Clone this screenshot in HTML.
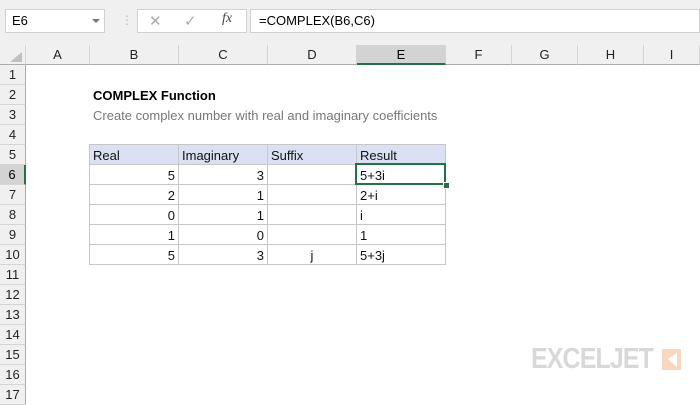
<!DOCTYPE html><html><head><style>
body{margin:0;width:700px;height:400px;background:#fff;font-family:"Liberation Sans",Calibri,sans-serif;position:relative;overflow:hidden}
.a{position:absolute}
.ch{position:absolute;top:45px;height:20px;background:#f0f0f0;border-right:1px solid #d4d4d4;border-bottom:1px solid #ababab;box-sizing:border-box;text-align:center;font-size:13px;line-height:20px;color:#222}
.rh{position:absolute;left:0;width:26px;height:20px;background:#f0f0f0;border-bottom:1px solid #d4d4d4;border-right:1px solid #ababab;box-sizing:border-box;text-align:center;font-size:13px;line-height:20px;color:#222}
.c{position:absolute;height:20px;box-sizing:border-box;font-size:13px;line-height:21px;padding:0 3px;color:#111;border-right:1px solid #c6c6c6;border-bottom:1px solid #c6c6c6}
.r{text-align:right}
</style></head><body>
<div class="a" style="left:0;top:0;width:700px;height:45px;background:#f0f0f0"></div>
<div class="a" style="left:5px;top:9px;width:100px;height:24px;background:#fff;border:1px solid #d0d0d0;box-sizing:border-box;font-size:13px;line-height:22px;padding-left:6px">E6</div>
<div class="a" style="left:92px;top:19px;width:0;height:0;border-left:4px solid transparent;border-right:4px solid transparent;border-top:4px solid #777"></div>
<div class="a" style="left:121px;top:13px;color:#bbb;font-size:12px">⋮</div>
<div class="a" style="left:137px;top:9px;width:110px;height:24px;background:#fff;border:1px solid #d0d0d0;box-sizing:border-box"></div>
<div class="a" style="left:149px;top:12px;color:#aaa;font-size:15px">✕</div>
<div class="a" style="left:184px;top:12px;color:#aaa;font-size:15px">✓</div>
<div class="a" style="left:222px;top:11px;color:#444;font-size:14px;font-style:italic;font-family:'Liberation Serif',serif">fx</div>
<div class="a" style="left:250px;top:9px;width:450px;height:24px;background:#fff;border:1px solid #d0d0d0;box-sizing:border-box;font-size:13px;line-height:22px;padding-left:8px">=COMPLEX(B6,C6)</div>
<div class="ch" style="left:0;width:26px"></div>
<div class="a" style="left:10px;top:52px;width:0;height:0;border-left:12px solid transparent;border-bottom:10px solid #c0c0c0"></div>
<div class="ch" style="left:26px;width:64px">A</div>
<div class="ch" style="left:90px;width:89px">B</div>
<div class="ch" style="left:179px;width:89px">C</div>
<div class="ch" style="left:268px;width:89px">D</div>
<div class="ch" style="left:357px;width:89px;background:#d3d3d3;border-bottom:2px solid #217346;color:#000">E</div>
<div class="ch" style="left:446px;width:66px">F</div>
<div class="ch" style="left:512px;width:66px">G</div>
<div class="ch" style="left:578px;width:66px">H</div>
<div class="ch" style="left:644px;width:56px">I</div>
<div class="rh" style="top:65px">1</div><div class="rh" style="top:85px">2</div><div class="rh" style="top:105px">3</div><div class="rh" style="top:125px">4</div><div class="rh" style="top:145px">5</div>
<div class="rh" style="top:165px;background:#d3d3d3;border-right:2px solid #217346;color:#000">6</div>
<div class="rh" style="top:185px">7</div><div class="rh" style="top:205px">8</div><div class="rh" style="top:225px">9</div><div class="rh" style="top:245px">10</div><div class="rh" style="top:265px">11</div><div class="rh" style="top:285px">12</div><div class="rh" style="top:305px">13</div><div class="rh" style="top:325px">14</div><div class="rh" style="top:345px">15</div><div class="rh" style="top:365px">16</div><div class="rh" style="top:385px">17</div>
<div class="a" style="left:93px;top:88px;font-size:13px;font-weight:bold">COMPLEX Function</div>
<div class="a" style="left:93px;top:108px;font-size:13px;color:#777">Create complex number with real and imaginary coefficients</div>
<div class="a" style="left:89px;top:145px;width:1px;height:120px;background:#c6c6c6"></div>
<div class="a" style="left:89px;top:144px;width:357px;height:1px;background:#c6c6c6"></div>
<div class="c" style="left:90px;top:145px;width:89px;background:#d9e1f2">Real</div>
<div class="c" style="left:179px;top:145px;width:89px;background:#d9e1f2">Imaginary</div>
<div class="c" style="left:268px;top:145px;width:89px;background:#d9e1f2">Suffix</div>
<div class="c" style="left:357px;top:145px;width:89px;background:#d9e1f2">Result</div>
<div class="c r" style="left:90px;top:165px;width:89px">5</div><div class="c r" style="left:179px;top:165px;width:89px">3</div><div class="c" style="left:268px;top:165px;width:89px"></div><div class="c" style="left:357px;top:165px;width:89px">5+3i</div>
<div class="c r" style="left:90px;top:185px;width:89px">2</div><div class="c r" style="left:179px;top:185px;width:89px">1</div><div class="c" style="left:268px;top:185px;width:89px"></div><div class="c" style="left:357px;top:185px;width:89px">2+i</div>
<div class="c r" style="left:90px;top:205px;width:89px">0</div><div class="c r" style="left:179px;top:205px;width:89px">1</div><div class="c" style="left:268px;top:205px;width:89px"></div><div class="c" style="left:357px;top:205px;width:89px">i</div>
<div class="c r" style="left:90px;top:225px;width:89px">1</div><div class="c r" style="left:179px;top:225px;width:89px">0</div><div class="c" style="left:268px;top:225px;width:89px"></div><div class="c" style="left:357px;top:225px;width:89px">1</div>
<div class="c r" style="left:90px;top:245px;width:89px">5</div><div class="c r" style="left:179px;top:245px;width:89px">3</div><div class="c" style="left:268px;top:245px;width:89px;text-align:center">j</div><div class="c" style="left:357px;top:245px;width:89px">5+3j</div>
<div class="a" style="left:355px;top:163px;width:91px;height:22px;border:2px solid #217346;box-sizing:border-box"></div>
<div class="a" style="left:443px;top:182px;width:5px;height:5px;background:#217346;border:1px solid #fff"></div>
<div class="a" style="left:531px;top:343px;font-size:29px;font-weight:bold;color:#d8d8d8;letter-spacing:-1px;transform:scaleX(0.86);transform-origin:left top;white-space:nowrap">EXCELJET</div>
<div class="a" style="left:662px;top:349px;width:19px;height:21px;background:#f9d7bd"></div>
<div class="a" style="left:668px;top:353px;width:0;height:0;border-top:6px solid transparent;border-bottom:8px solid transparent;border-right:9px solid #fff"></div>
</body></html>
